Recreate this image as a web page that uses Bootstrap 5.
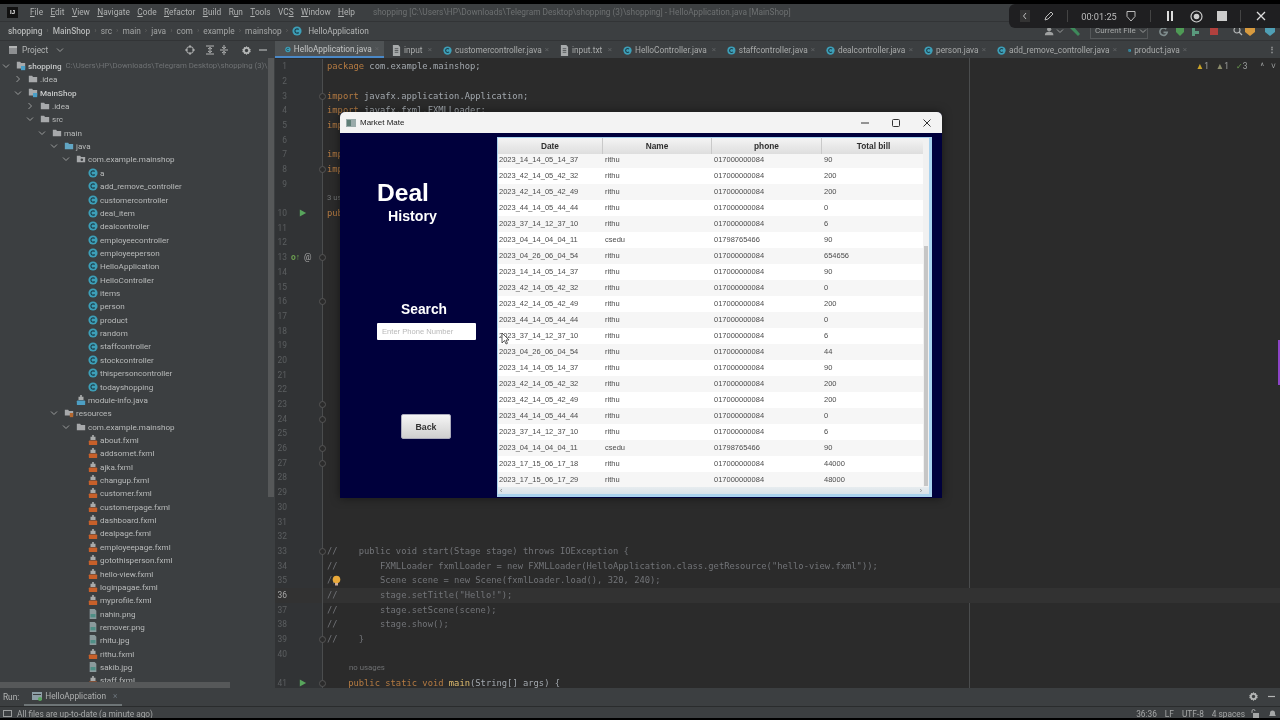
<!DOCTYPE html>
<html lang="en">
<head>
<meta charset="utf-8">
<title>HelloApplication.java</title>
<link href="https://cdn.jsdelivr.net/npm/bootstrap@5.3.0/dist/css/bootstrap.min.css" rel="stylesheet">
<style>
html,body{height:720px;overflow:hidden;background:#000}
body{font-family:Roboto,"Liberation Sans",sans-serif;font-size:8.3px;color:#b4b6b6;padding:4px 0 2px}
.ide{height:714px;position:relative;background:#2b2b2b;filter:blur(.4px)}
.ml1{margin-left:1px}.ml2{margin-left:2px}.ml4{margin-left:4px}.ml5{margin-left:5px}.ml6{margin-left:6px}.ml8{margin-left:8px}.ml9{margin-left:9px}.ml10{margin-left:10px}.ml12{margin-left:12px}.ml14{margin-left:14px}
.titlebar{height:17px;background:#3c3f41;padding-left:7px}
.titlebar u{text-underline-offset:1px}
.ij{width:11px;height:11px;background:#111;color:#eee;font:bold 6px/11px "Liberation Sans",sans-serif;text-align:center}
.menus{margin-left:12px;gap:7.4px;font-size:8.3px;color:#b0b2b2}
.wintitle{margin-left:18px;color:#6d7071;font-size:8.3px;white-space:nowrap}
.navrow{height:20px;background:#3c3f41;padding-left:8px;border-top:1px solid #323436;border-bottom:1px solid #323436;gap:4px;font-size:8.3px}
.navrow .sep{color:#666;font-size:8px}
.navrow .dimtx{color:#a3a5a5}
.navrow b{font-weight:500}
.runtools{color:#9a9c9c}
.curfile{width:58px;height:15px;border:1px solid #55585a;padding-left:4px;color:#a6a8a8;font-size:8px;white-space:nowrap}
.tabrow{height:17px;background:#3c3f41}
.projhead{width:275px;padding:1px 7px 0 8px;flex:none;font-size:8.3px}
.tabs{flex:1;font-size:8.3px;color:#a8aaaa;white-space:nowrap;overflow:hidden}
.edtab{height:17px;padding:1px 5px 0 6px;gap:3px;flex:none}
.edtab.cur{background:#4e5254;border-bottom:2px solid #4a88c7;color:#c4c6c6;padding-left:10px;margin-right:2px}
.edtab .xx{color:#5f6264;font-size:8px;margin-left:auto}
.w1{width:109px}.w2{width:51px}.w3{width:117px}.w4{width:63px}.w5{width:104px}.w6{width:99px}.w7{width:98px}.w8{width:73px}.w9{width:131px}.w10{width:70px}
.mainarea{height:630px}
.projtree{width:275px;flex:none;background:#3c3f41;position:relative;overflow:hidden;padding-top:1.3px}
.tr{height:13.37px;white-space:nowrap;font-size:8.1px;color:#b9bbbb}
.tr b{font-weight:500;color:#c6c8c8}
.tr .pathx{color:#6f7274;margin-left:4px;font-size:7.8px}
.chev{width:16px;flex:none;padding-left:2px;line-height:0}
.ico{width:10px;height:10px;flex:none;margin-right:2px}
.lv0{padding-left:0}.lv1{padding-left:12px}.lv2{padding-left:24px}.lv3{padding-left:36px}.lv4{padding-left:48px}.lv5{padding-left:60px}
.leaf{padding-left:88px}
.vscroll{position:absolute;left:268px;top:0;width:6px;height:439px;background:#565859}
.hscroll{position:absolute;left:0;top:624px;width:230px;height:6px;background:#565859}
.edpane{flex:1;position:relative;overflow:hidden;background:linear-gradient(#4a4c4d,#4a4c4d) 694px 0/1px 100% no-repeat #2b2b2b;padding-top:1.2px}
.er{height:14.7px;font:8.8px/14.7px "DejaVu Sans Mono","Liberation Mono",monospace;color:#a2a8ae;white-space:pre;position:relative}
.er.caretln{background:#323232}
.er.caretln .gut{background:#323232;color:#a8a8a8}
.gut{width:48px;flex:none;height:100%;background:#313335;border-right:1px solid #4b4d4e;color:#5c5f61;padding-right:35px;text-align:right;position:relative;font:8.4px/14.7px Roboto,sans-serif}
.gut.fold::after{content:"";position:absolute;right:-4px;top:4px;width:7px;height:7px;border:1px solid #555;border-radius:50%;background:#2b2b2b}
.cd{padding-left:4px}
.kw{color:#b57b42}
.fn{color:#e0bd6f}
.cm{color:#727478}
.inl{color:#6e7072;font:7.8px/14.7px Roboto,sans-serif}
.inlfar{padding-left:26px}
.mk{position:absolute;top:50%;transform:translateY(-50%);line-height:1}
.bulb{position:absolute;left:56px;top:2px}
.insp{position:absolute;right:4px;top:2px;gap:7px;color:#9ea0a0;font-size:8.4px}
.runbar{height:18.5px;background:#3c3f41;border-bottom:1px solid #2a2c2d;padding-left:3px;position:relative;font-size:8.3px}
.runtab{width:98px;height:17.5px;margin-left:5px;padding:0 0 0 8px;border-bottom:2px solid #6e7577;gap:3px;color:#aeb0b0}
.statusbar{height:11.5px;background:#3c3f41;padding:3px 0 0 3px;font-size:8.3px;color:#a5a7a7;overflow:hidden}
.statusbar>*{flex:none}
.statusr{padding-right:3px}
.appwin{position:absolute;left:340px;top:108px;width:602px;height:386px;border-radius:5px 5px 0 0;overflow:hidden;background:#00003c;box-shadow:0 0 10px rgba(0,0,0,.5)}
.apphead{height:21px;background:#f3f3f3;color:#222;font:8px "Liberation Sans",sans-serif;padding-left:6px;gap:4px}
.wcb{width:31px;text-align:center;line-height:0}
.appbody{height:365px;background:#00003c;padding:4px 10px 1px 0}
.leftp{width:157px;flex:none;padding-left:37px;color:#fff;font-family:"Liberation Sans",sans-serif;font-weight:700}
.dealh{font-size:24.6px;line-height:28px;margin-top:42px}
.histh{font-size:14.2px;line-height:16px;margin:1px 0 0 11px}
.srchh{font-size:13.8px;line-height:16px;margin:78px 0 0 24px}
.phone{width:99px;height:17px;min-height:0;margin-top:5px;padding:0 5px;border:0;border-radius:1px;font-size:7.6px;font-weight:400;font-family:"Liberation Sans",sans-serif}
.phone::placeholder{color:#b9b9b9;opacity:1}
.backb{width:50px;height:25px;margin:74px 0 0 24px;padding:0;border:1px solid #aab;border-radius:2px;background:linear-gradient(#f5f5f5,#cfcfcf);color:#333;font:700 8.8px "Liberation Sans",sans-serif}
.tblbox{flex:1;background:#fff;border:solid #a9d2ee;border-width:1px 3px 3px 1px;position:relative;overflow:hidden;height:360px;width:435px}
.tblhead{height:16px;background:linear-gradient(#f4f4f4,#dedede);width:428px;font:700 8.3px/16px "Liberation Sans",sans-serif;color:#2e2e2e;text-align:center}
.tblhead>div{border-right:1px solid #c9c9c9}
.cdate{width:105px}.cname{width:109px}.cphone{width:110px}.cbill{width:104px}
.tblclip{height:334px;overflow:hidden;width:428px}
.billt{table-layout:fixed;width:428px;margin:-2px 0 0;--bs-table-bg:transparent;--bs-table-striped-bg:#f6f6f6;--bs-table-striped-color:#4c4c4c;--bs-table-color:#4c4c4c;font:7.5px "Liberation Sans",sans-serif}
.billt td{height:16px;padding:0 1px 0 2px;border:0;line-height:16px;white-space:nowrap;overflow:hidden;vertical-align:middle}
.billt td:first-child{padding-left:1px}
.tvs{position:absolute;right:0;top:0;width:6px;bottom:7px;background:#f1f1f1}
.tvth{position:absolute;right:1px;top:108px;width:4px;height:240px;background:#c6c6c6}
.ths{position:absolute;left:0;bottom:0;height:7px;width:432px;background:linear-gradient(#e7ecef,#d8e2e9);color:#777;font:7px/7px "Liberation Sans",sans-serif;padding:0 8px 0 2px}
.pointer{position:absolute;left:161px;top:220px}
.recorder{position:absolute;left:1009px;top:0;width:271px;height:24px;background:#1f1f21;border-radius:6px 0 0 6px;color:#bdbdbd;font-size:9px;padding-left:4px;overflow:hidden}
.recitem{flex:none;line-height:0;text-align:center}
.recw24{width:24px}.recw26{width:26px}.recw37{width:37px}.recw16{width:16px}.recw36{width:36px}.recw39{width:39px}
.rectime{width:38px;line-height:normal;font-size:9.2px;white-space:nowrap;margin-left:12px}
.recsep{width:1px;height:12px;background:#444;flex:none}
.purple{position:absolute;right:0;top:336px;width:2px;height:45px;background:#8e44c8}
</style>
</head>
<body>
<svg width="0" height="0" class="position-absolute">
<symbol id="cl" viewBox="0 0 12 12"><circle cx="6" cy="6" r="5.500" fill="#3d9fb8"/><path d="M8 4.200A2.600 2.600 0 1 0 8 7.800" fill="none" stroke="#1d3f4b" stroke-width="1.400"/></symbol>
<symbol id="fo" viewBox="0 0 12 12"><path d="M1 2h4l1 1.500h5V10H1z" fill="#a7a9ab"/></symbol>
<symbol id="fb" viewBox="0 0 12 12"><path d="M1 2h4l1 1.500h5V10H1z" fill="#62a6c4"/></symbol>
<symbol id="fp" viewBox="0 0 12 12"><path d="M1 2h4l1 1.500h5V10H1z" fill="#a7a9ab"/><circle cx="7" cy="7" r="1.500" fill="#3c3f41"/></symbol>
<symbol id="fm" viewBox="0 0 12 12"><path d="M1 1h4l1 1.500h5V9H1z" fill="#a7a9ab"/><rect x="6" y="6" width="5" height="5" fill="#4a9fc7"/></symbol>
<symbol id="fr" viewBox="0 0 12 12"><path d="M1 2h4l1 1.500h5V9H1z" fill="#a7a9ab"/><rect x="7" y="6" width="4" height="5" fill="#b5682f"/></symbol>
<symbol id="fx" viewBox="0 0 12 12"><path d="M5 0h2v2h2v4H3V2h2z" fill="#a9abab"/><rect x="1" y="6.500" width="10" height="5.500" rx="1" fill="#c8602a"/></symbol>
<symbol id="mi" viewBox="0 0 12 12"><path d="M5 0h2v2h2v4H3V2h2z" fill="#a9abab"/><rect x="1" y="6.500" width="10" height="5.500" rx="1" fill="#4d9fc4"/></symbol>
<symbol id="im" viewBox="0 0 12 12"><path d="M2 0h6l2 2v10H2z" fill="#8b9a9c"/><rect x="3" y="6" width="6" height="4" fill="#4f8f86"/></symbol>
<symbol id="dn" viewBox="0 0 8 8"><path d="M1 2.500l3 3 3-3" fill="none" stroke="#9a9c9c" stroke-width="1"/></symbol>
<symbol id="rt" viewBox="0 0 8 8"><path d="M2.500 1l3 3-3 3" fill="none" stroke="#9a9c9c" stroke-width="1"/></symbol>
<symbol id="tx" viewBox="0 0 10 12"><path d="M1 0h6l2 2v10H1z" fill="#a7aaab"/><path d="M3 4h4M3 6h4M3 8h4" stroke="#3c3f41" stroke-width=".8"/></symbol>
<symbol id="gr" viewBox="0 0 12 12"><path d="M6 1l1 1.400 1.700-.3.300 1.700 1.700.7-.7 1.500.7 1.500-1.700.7-.3 1.700-1.700-.3L6 11l-1-1.400-1.700.3-.3-1.700-1.700-.7L2 6 1.300 4.500 3 3.800l.3-1.700 1.700.3z" fill="#b3b5b5"/><circle cx="6" cy="6" r="1.800" fill="#3c3f41"/></symbol>
<symbol id="pl" viewBox="0 0 10 10"><path d="M2 1l7 4-7 4z" fill="#58a55c"/></symbol>
</svg>

<div class="ide">
  <div class="titlebar d-flex align-items-center">
    <div class="ij">IJ</div>
    <div class="menus d-flex">
      <span><u>F</u>ile</span><span><u>E</u>dit</span><span><u>V</u>iew</span><span><u>N</u>avigate</span><span><u>C</u>ode</span><span><u>R</u>efactor</span><span><u>B</u>uild</span><span>R<u>u</u>n</span><span><u>T</u>ools</span><span>VC<u>S</u></span><span><u>W</u>indow</span><span><u>H</u>elp</span>
    </div>
    <div class="wintitle">shopping [C:\Users\HP\Downloads\Telegram Desktop\shopping (3)\shopping] - HelloApplication.java [MainShop]</div>
  </div>

  <div class="navrow d-flex align-items-center">
    <b>shopping</b><span class="sep">›</span><b>MainShop</b><span class="sep">›</span><span class="dimtx">src</span><span class="sep">›</span><span class="dimtx">main</span><span class="sep">›</span><span class="dimtx">java</span><span class="sep">›</span><span class="dimtx">com</span><span class="sep">›</span><span class="dimtx">example</span><span class="sep">›</span><span class="dimtx">mainshop</span><span class="sep">›</span><svg class="ico"><use href="#cl"/></svg><span>HelloApplication</span>
    <div class="runtools d-flex align-items-center ms-auto">
      <svg width="12" height="12" viewBox="0 0 14 12"><circle cx="6" cy="4" r="2.500" fill="#9fa1a1"/><path d="M1 11c0-3 2-4 5-4s5 1 5 4z" fill="#9fa1a1"/></svg>
      <svg width="8" height="8"><use href="#dn"/></svg>
      <svg width="12" height="12" viewBox="0 0 12 12" class="ml5"><path d="M1 3l3-2 7 8-2 2z" fill="#3e8a5b"/></svg>
      <div class="curfile d-flex align-items-center ml9">Current File<svg width="8" height="8" class="ms-auto"><use href="#dn"/></svg></div>
      <svg width="11" height="11" viewBox="0 0 12 12" class="ml10"><path d="M9 3.500A4 4 0 1 0 10 7H6" fill="none" stroke="#7f8c8d" stroke-width="1.800"/></svg>
      <svg width="10" height="11" viewBox="0 0 10 11" class="ml6"><path d="M1 1h8v5l-4 4-4-4z" fill="#4e9a55"/></svg>
      <svg width="10" height="11" viewBox="0 0 10 11" class="ml5"><path d="M2 1h3v9H2zM5 5h4v3H5z" fill="#5a9a7d"/></svg>
      <svg width="10" height="10" viewBox="0 0 10 10" class="ml9"><rect x="1" y="1" width="8" height="8" fill="#b0413e"/></svg>
      <svg width="10" height="10" viewBox="0 0 10 10" class="ml14"><circle cx="4" cy="4" r="3" fill="none" stroke="#b4b6b6" stroke-width="1.200"/><path d="M6 6l3 3" stroke="#b4b6b6" stroke-width="1.200"/></svg>
      <svg width="12" height="12" viewBox="0 0 12 12" class="ml1"><path d="M1 2l5-1 5 1v5l-5 4-5-4z" fill="#d79a3f"/></svg>
      <svg width="12" height="12" viewBox="0 0 12 12" class="ml8 me-1"><path d="M1 2l5-1 5 1v5l-5 4-5-4z" fill="#4f9fb5"/></svg>
    </div>
  </div>

  <div class="tabrow d-flex align-items-center">
    <div class="projhead d-flex align-items-center">
      <svg width="10" height="10" viewBox="0 0 10 10" class="me-1"><rect x="1" y="1" width="8" height="8" fill="#8d8f91"/><rect x="1" y="1" width="8" height="2" fill="#b2b4b4"/></svg>
      <span>Project</span><svg width="8" height="8" class="ms-2"><use href="#dn"/></svg>
      <div class="d-flex align-items-center ms-auto">
        <svg width="10" height="10" viewBox="0 0 10 10"><circle cx="5" cy="5" r="3.500" fill="none" stroke="#b3b5b5"/><path d="M5 0v3M5 7v3M0 5h3M7 5h3" stroke="#b3b5b5"/></svg>
        <svg width="10" height="10" viewBox="0 0 10 10" class="ml10"><path d="M1 1h8M1 9h8M5 2.500v5M3 4l2-1.500L7 4M3 6l2 1.500L7 6" fill="none" stroke="#b3b5b5"/></svg>
        <svg width="10" height="10" viewBox="0 0 10 10" class="ml4"><path d="M1 5h8M5 0v3.500M5 10V6.500M3 2l2 1.500L7 2M3 8l2-1.500L7 8" fill="none" stroke="#b3b5b5"/></svg>
        <svg width="11" height="11" class="ml12"><use href="#gr"/></svg>
        <svg width="10" height="10" viewBox="0 0 10 10" class="ml6"><path d="M1 5h8" stroke="#b3b5b5" stroke-width="1.200"/></svg>
      </div>
    </div>
    <div class="tabs d-flex align-items-center">
      <div class="edtab cur w1 d-flex align-items-center"><svg width="9" height="9"><use href="#cl"/></svg><span>HelloApplication.java</span><span class="xx">×</span></div>
      <div class="edtab w2 d-flex align-items-center"><svg width="9" height="11"><use href="#tx"/></svg><span>input</span><span class="xx">×</span></div>
      <div class="edtab w3 d-flex align-items-center"><svg width="9" height="9"><use href="#cl"/></svg><span>customercontroller.java</span><span class="xx">×</span></div>
      <div class="edtab w4 d-flex align-items-center"><svg width="9" height="11"><use href="#tx"/></svg><span>input.txt</span><span class="xx">×</span></div>
      <div class="edtab w5 d-flex align-items-center"><svg width="9" height="9"><use href="#cl"/></svg><span>HelloController.java</span><span class="xx">×</span></div>
      <div class="edtab w6 d-flex align-items-center"><svg width="9" height="9"><use href="#cl"/></svg><span>staffcontroller.java</span><span class="xx">×</span></div>
      <div class="edtab w7 d-flex align-items-center"><svg width="9" height="9"><use href="#cl"/></svg><span>dealcontroller.java</span><span class="xx">×</span></div>
      <div class="edtab w8 d-flex align-items-center"><svg width="9" height="9"><use href="#cl"/></svg><span>person.java</span><span class="xx">×</span></div>
      <div class="edtab w9 d-flex align-items-center"><svg width="9" height="9"><use href="#cl"/></svg><span>add_remove_controller.java</span><span class="xx">×</span></div>
      <div class="edtab w10 d-flex align-items-center"><svg width="9" height="9"><use href="#cl"/></svg><span>product.java</span><span class="xx">×</span></div>
      <div class="ms-auto pe-1 fw-bold">⋮</div>
    </div>
  </div>

  <div class="mainarea d-flex">
    <div class="projtree">
      <div class="tr lv0 d-flex align-items-center"><span class="chev"><svg width="8" height="8"><use href="#dn"/></svg></span><svg class="ico"><use href="#fm"/></svg><b>shopping</b><span class="pathx">C:\Users\HP\Downloads\Telegram Desktop\shopping (3)\s</span></div>
      <div class="tr lv1 d-flex align-items-center"><span class="chev"><svg width="8" height="8"><use href="#rt"/></svg></span><svg class="ico"><use href="#fo"/></svg>.idea</div>
      <div class="tr lv1 d-flex align-items-center"><span class="chev"><svg width="8" height="8"><use href="#dn"/></svg></span><svg class="ico"><use href="#fm"/></svg><b>MainShop</b></div>
      <div class="tr lv2 d-flex align-items-center"><span class="chev"><svg width="8" height="8"><use href="#rt"/></svg></span><svg class="ico"><use href="#fo"/></svg>.idea</div>
      <div class="tr lv2 d-flex align-items-center"><span class="chev"><svg width="8" height="8"><use href="#dn"/></svg></span><svg class="ico"><use href="#fo"/></svg>src</div>
      <div class="tr lv3 d-flex align-items-center"><span class="chev"><svg width="8" height="8"><use href="#dn"/></svg></span><svg class="ico"><use href="#fo"/></svg>main</div>
      <div class="tr lv4 d-flex align-items-center"><span class="chev"><svg width="8" height="8"><use href="#dn"/></svg></span><svg class="ico"><use href="#fb"/></svg>java</div>
      <div class="tr lv5 d-flex align-items-center"><span class="chev"><svg width="8" height="8"><use href="#dn"/></svg></span><svg class="ico"><use href="#fp"/></svg>com.example.mainshop</div>
      <div class="tr leaf d-flex align-items-center"><svg class="ico"><use href="#cl"/></svg>a</div>
      <div class="tr leaf d-flex align-items-center"><svg class="ico"><use href="#cl"/></svg>add_remove_controller</div>
      <div class="tr leaf d-flex align-items-center"><svg class="ico"><use href="#cl"/></svg>customercontroller</div>
      <div class="tr leaf d-flex align-items-center"><svg class="ico"><use href="#cl"/></svg>deal_item</div>
      <div class="tr leaf d-flex align-items-center"><svg class="ico"><use href="#cl"/></svg>dealcontroller</div>
      <div class="tr leaf d-flex align-items-center"><svg class="ico"><use href="#cl"/></svg>employeecontroller</div>
      <div class="tr leaf d-flex align-items-center"><svg class="ico"><use href="#cl"/></svg>employeeperson</div>
      <div class="tr leaf d-flex align-items-center"><svg class="ico"><use href="#cl"/></svg>HelloApplication</div>
      <div class="tr leaf d-flex align-items-center"><svg class="ico"><use href="#cl"/></svg>HelloController</div>
      <div class="tr leaf d-flex align-items-center"><svg class="ico"><use href="#cl"/></svg>items</div>
      <div class="tr leaf d-flex align-items-center"><svg class="ico"><use href="#cl"/></svg>person</div>
      <div class="tr leaf d-flex align-items-center"><svg class="ico"><use href="#cl"/></svg>product</div>
      <div class="tr leaf d-flex align-items-center"><svg class="ico"><use href="#cl"/></svg>random</div>
      <div class="tr leaf d-flex align-items-center"><svg class="ico"><use href="#cl"/></svg>staffcontroller</div>
      <div class="tr leaf d-flex align-items-center"><svg class="ico"><use href="#cl"/></svg>stockcontroller</div>
      <div class="tr leaf d-flex align-items-center"><svg class="ico"><use href="#cl"/></svg>thispersoncontroller</div>
      <div class="tr leaf d-flex align-items-center"><svg class="ico"><use href="#cl"/></svg>todayshopping</div>
      <div class="tr lv5 d-flex align-items-center"><span class="chev"></span><svg class="ico"><use href="#mi"/></svg>module-info.java</div>
      <div class="tr lv4 d-flex align-items-center"><span class="chev"><svg width="8" height="8"><use href="#dn"/></svg></span><svg class="ico"><use href="#fr"/></svg>resources</div>
      <div class="tr lv5 d-flex align-items-center"><span class="chev"><svg width="8" height="8"><use href="#dn"/></svg></span><svg class="ico"><use href="#fo"/></svg>com.example.mainshop</div>
      <div class="tr leaf d-flex align-items-center"><svg class="ico"><use href="#fx"/></svg>about.fxml</div>
      <div class="tr leaf d-flex align-items-center"><svg class="ico"><use href="#fx"/></svg>addsomet.fxml</div>
      <div class="tr leaf d-flex align-items-center"><svg class="ico"><use href="#fx"/></svg>ajka.fxml</div>
      <div class="tr leaf d-flex align-items-center"><svg class="ico"><use href="#fx"/></svg>changup.fxml</div>
      <div class="tr leaf d-flex align-items-center"><svg class="ico"><use href="#fx"/></svg>customer.fxml</div>
      <div class="tr leaf d-flex align-items-center"><svg class="ico"><use href="#fx"/></svg>customerpage.fxml</div>
      <div class="tr leaf d-flex align-items-center"><svg class="ico"><use href="#fx"/></svg>dashboard.fxml</div>
      <div class="tr leaf d-flex align-items-center"><svg class="ico"><use href="#fx"/></svg>dealpage.fxml</div>
      <div class="tr leaf d-flex align-items-center"><svg class="ico"><use href="#fx"/></svg>employeepage.fxml</div>
      <div class="tr leaf d-flex align-items-center"><svg class="ico"><use href="#fx"/></svg>gotothisperson.fxml</div>
      <div class="tr leaf d-flex align-items-center"><svg class="ico"><use href="#fx"/></svg>hello-view.fxml</div>
      <div class="tr leaf d-flex align-items-center"><svg class="ico"><use href="#fx"/></svg>loginpagae.fxml</div>
      <div class="tr leaf d-flex align-items-center"><svg class="ico"><use href="#fx"/></svg>myprofile.fxml</div>
      <div class="tr leaf d-flex align-items-center"><svg class="ico"><use href="#im"/></svg>nahin.png</div>
      <div class="tr leaf d-flex align-items-center"><svg class="ico"><use href="#im"/></svg>remover.png</div>
      <div class="tr leaf d-flex align-items-center"><svg class="ico"><use href="#im"/></svg>rhitu.jpg</div>
      <div class="tr leaf d-flex align-items-center"><svg class="ico"><use href="#fx"/></svg>rithu.fxml</div>
      <div class="tr leaf d-flex align-items-center"><svg class="ico"><use href="#im"/></svg>sakib.jpg</div>
      <div class="tr leaf d-flex align-items-center"><svg class="ico"><use href="#fx"/></svg>staff.fxml</div>
      <div class="vscroll"></div>
      <div class="hscroll"></div>
    </div>

    <div class="edpane">
      <div class="er d-flex"><div class="gut">1</div><div class="cd"><span class="kw">package</span> com.example.mainshop;</div></div>
      <div class="er d-flex"><div class="gut">2</div></div>
      <div class="er d-flex"><div class="gut fold">3</div><div class="cd"><span class="kw">import</span> javafx.application.Application;</div></div>
      <div class="er d-flex"><div class="gut">4</div><div class="cd"><span class="kw">import</span> javafx.fxml.FXMLLoader;</div></div>
      <div class="er d-flex"><div class="gut">5</div><div class="cd"><span class="kw">imp</span></div></div>
      <div class="er d-flex"><div class="gut">6</div></div>
      <div class="er d-flex"><div class="gut">7</div><div class="cd"><span class="kw">imp</span></div></div>
      <div class="er d-flex"><div class="gut fold">8</div><div class="cd"><span class="kw">imp</span></div></div>
      <div class="er d-flex"><div class="gut">9</div></div>
      <div class="er d-flex"><div class="gut"></div><div class="cd inl">3 us</div></div>
      <div class="er d-flex"><div class="gut">10<svg class="mk" style="left:23px" width="9" height="9"><use href="#pl"/></svg></div><div class="cd"><span class="kw">pub</span></div></div>
      <div class="er d-flex"><div class="gut">11</div></div>
      <div class="er d-flex"><div class="gut">12</div></div>
      <div class="er d-flex"><div class="gut fold">13<span class="mk" style="left:16px;color:#6a9c4f;font-weight:700">o↑</span><span class="mk" style="left:29px;color:#aaa">@</span></div></div>
      <div class="er d-flex"><div class="gut">14</div></div>
      <div class="er d-flex"><div class="gut">15</div></div>
      <div class="er d-flex"><div class="gut fold">16</div></div>
      <div class="er d-flex"><div class="gut">17</div></div>
      <div class="er d-flex"><div class="gut">18</div></div>
      <div class="er d-flex"><div class="gut">19</div></div>
      <div class="er d-flex"><div class="gut">20</div></div>
      <div class="er d-flex"><div class="gut">21</div></div>
      <div class="er d-flex"><div class="gut">22</div></div>
      <div class="er d-flex"><div class="gut fold">23</div></div>
      <div class="er d-flex"><div class="gut fold">24</div></div>
      <div class="er d-flex"><div class="gut">25</div></div>
      <div class="er d-flex"><div class="gut fold">26</div></div>
      <div class="er d-flex"><div class="gut fold">27</div></div>
      <div class="er d-flex"><div class="gut">28</div></div>
      <div class="er d-flex"><div class="gut">29</div></div>
      <div class="er d-flex"><div class="gut">30</div></div>
      <div class="er d-flex"><div class="gut">31</div></div>
      <div class="er d-flex"><div class="gut">32</div></div>
      <div class="er d-flex"><div class="gut fold">33</div><div class="cd cm">//    public void start(Stage stage) throws IOException {</div></div>
      <div class="er d-flex"><div class="gut">34</div><div class="cd cm">//        FXMLLoader fxmlLoader = new FXMLLoader(HelloApplication.class.getResource("hello-view.fxml"));</div></div>
      <div class="er d-flex"><div class="gut">35</div><div class="cd cm">//        Scene scene = new Scene(fxmlLoader.load(), 320, 240);</div><svg class="bulb" width="11" height="11" viewBox="0 0 11 11"><circle cx="5.500" cy="4.500" r="3.800" fill="#e9a93a"/><rect x="4" y="8" width="3" height="2.500" fill="#ccaa99"/></svg></div>
      <div class="er caretln d-flex"><div class="gut">36</div><div class="cd cm">//        stage.setTitle("Hello!");</div></div>
      <div class="er d-flex"><div class="gut">37</div><div class="cd cm">//        stage.setScene(scene);</div></div>
      <div class="er d-flex"><div class="gut">38</div><div class="cd cm">//        stage.show();</div></div>
      <div class="er d-flex"><div class="gut fold">39</div><div class="cd cm">//    }</div></div>
      <div class="er d-flex"><div class="gut">40</div></div>
      <div class="er d-flex"><div class="gut"></div><div class="cd inl inlfar">no usages</div></div>
      <div class="er d-flex"><div class="gut fold">41<svg class="mk" style="left:23px" width="9" height="9"><use href="#pl"/></svg></div><div class="cd">    <span class="kw">public static void</span> <span class="fn">main</span>(String[] args) {</div></div>
      <div class="insp d-flex align-items-center">
        <span><span style="color:#c9a227">▲</span>1</span><span><span style="color:#8a8a6a">▲</span>1</span><span><span style="color:#6a9c4f">✓</span>3</span><span class="ml6">^</span><span>˅</span>
      </div>
    </div>
  </div>

  <div class="runbar d-flex align-items-center">
    <span>Run:</span>
    <div class="runtab d-flex align-items-center">
      <svg width="10" height="10" viewBox="0 0 10 10"><rect x="0" y="1" width="10" height="8" fill="#8d9ea5"/><rect x="1" y="3" width="8" height="1" fill="#3c3f41"/><circle cx="8" cy="8" r="2" fill="#58a55c"/></svg><span>HelloApplication</span><span class="text-secondary ml4">×</span>
    </div>
    <svg width="11" height="11" class="ms-auto"><use href="#gr"/></svg>
    <svg width="9" height="9" viewBox="0 0 9 9" class="ml8 me-1"><path d="M1 4.500h7" stroke="#b3b5b5" stroke-width="1.200"/></svg>
  </div>
  <div class="statusbar d-flex align-items-center">
    <svg width="9" height="9" viewBox="0 0 9 9"><rect x=".5" y="1.500" width="8" height="6" fill="none" stroke="#9a9c9c"/></svg>
    <span class="ml5">All files are up-to-date (a minute ago)</span>
    <div class="statusr d-flex align-items-center ms-auto">
      <span>36:36</span><span class="ml8">LF</span><span class="ml8">UTF-8</span><span class="ml8">4 spaces</span>
      <svg width="9" height="9" viewBox="0 0 9 9" class="ml6"><rect x="2" y="4" width="6" height="5" fill="#a5a7a7"/><path d="M1 4V2a1.500 1.500 0 0 1 3 0" fill="none" stroke="#a5a7a7"/></svg>
      <svg width="9" height="9" viewBox="0 0 9 9" class="ml8"><path d="M1 7c1-1 1-2 1-3a2.500 2.500 0 0 1 5 0c0 1 0 2 1 3z" fill="#a5a7a7"/></svg>
    </div>
  </div>

  <div class="appwin">
    <div class="apphead d-flex align-items-center">
      <svg width="10" height="10" viewBox="0 0 10 10"><rect x="0" y="1" width="10" height="8" fill="#99aaaa"/><rect x="1" y="2" width="4" height="6" fill="#5f7f78"/></svg>
      <span>Market Mate</span>
      <div class="d-flex align-items-center ms-auto">
        <div class="wcb"><svg width="10" height="10" viewBox="0 0 10 10"><path d="M1 5h8" stroke="#333"/></svg></div>
        <div class="wcb"><svg width="10" height="10" viewBox="0 0 10 10"><rect x="1.500" y="1.500" width="7" height="7" rx="1" fill="none" stroke="#333"/></svg></div>
        <div class="wcb"><svg width="10" height="10" viewBox="0 0 10 10"><path d="M1.500 1.500l7 7M8.500 1.500l-7 7" stroke="#333"/></svg></div>
      </div>
    </div>
    <div class="appbody d-flex">
      <div class="leftp">
        <div class="dealh">Deal</div>
        <div class="histh">History</div>
        <div class="srchh">Search</div>
        <input class="form-control phone" type="text" placeholder="Enter Phone Number">
        <button class="btn backb" type="button">Back</button>
      </div>
      <div class="tblbox">
        <div class="tblhead d-flex"><div class="cdate">Date</div><div class="cname">Name</div><div class="cphone">phone</div><div class="cbill">Total bill</div></div>
        <div class="tblclip">
          <table class="table table-striped billt">
            <colgroup><col class="cdate"><col class="cname"><col class="cphone"><col class="cbill"></colgroup>
            <tbody>
              <tr><td>2023_14_14_05_14_37</td><td>rithu</td><td>017000000084</td><td>90</td></tr>
              <tr><td>2023_42_14_05_42_32</td><td>rithu</td><td>017000000084</td><td>200</td></tr>
              <tr><td>2023_42_14_05_42_49</td><td>rithu</td><td>017000000084</td><td>200</td></tr>
              <tr><td>2023_44_14_05_44_44</td><td>rithu</td><td>017000000084</td><td>0</td></tr>
              <tr><td>2023_37_14_12_37_10</td><td>rithu</td><td>017000000084</td><td>6</td></tr>
              <tr><td>2023_04_14_04_04_11</td><td>csedu</td><td>01798765466</td><td>90</td></tr>
              <tr><td>2023_04_26_06_04_54</td><td>rithu</td><td>017000000084</td><td>654656</td></tr>
              <tr><td>2023_14_14_05_14_37</td><td>rithu</td><td>017000000084</td><td>90</td></tr>
              <tr><td>2023_42_14_05_42_32</td><td>rithu</td><td>017000000084</td><td>0</td></tr>
              <tr><td>2023_42_14_05_42_49</td><td>rithu</td><td>017000000084</td><td>200</td></tr>
              <tr><td>2023_44_14_05_44_44</td><td>rithu</td><td>017000000084</td><td>0</td></tr>
              <tr><td>2023_37_14_12_37_10</td><td>rithu</td><td>017000000084</td><td>6</td></tr>
              <tr><td>2023_04_26_06_04_54</td><td>rithu</td><td>017000000084</td><td>44</td></tr>
              <tr><td>2023_14_14_05_14_37</td><td>rithu</td><td>017000000084</td><td>90</td></tr>
              <tr><td>2023_42_14_05_42_32</td><td>rithu</td><td>017000000084</td><td>200</td></tr>
              <tr><td>2023_42_14_05_42_49</td><td>rithu</td><td>017000000084</td><td>200</td></tr>
              <tr><td>2023_44_14_05_44_44</td><td>rithu</td><td>017000000084</td><td>0</td></tr>
              <tr><td>2023_37_14_12_37_10</td><td>rithu</td><td>017000000084</td><td>6</td></tr>
              <tr><td>2023_04_14_04_04_11</td><td>csedu</td><td>01798765466</td><td>90</td></tr>
              <tr><td>2023_17_15_06_17_18</td><td>rithu</td><td>017000000084</td><td>44000</td></tr>
              <tr><td>2023_17_15_06_17_29</td><td>rithu</td><td>017000000084</td><td>48000</td></tr>
            </tbody>
          </table>
        </div>
        <div class="tvs"><div class="tvth"></div></div>
        <div class="ths d-flex justify-content-between"><span>‹</span><span>›</span></div>
      </div>
    </div>
    <svg class="pointer" width="10" height="13" viewBox="0 0 10 13"><path d="M1 1v10l2.500-2.500L5 12l1.500-.7L5 8h3z" fill="#fff" stroke="#333" stroke-width=".8"/></svg>
  </div>

  <div class="recorder d-flex align-items-center">
    <div class="recitem recw24"><svg width="10" height="12" viewBox="0 0 10 12"><rect width="10" height="12" fill="#333"/><path d="M6 3L3.500 6 6 9" fill="none" stroke="#bbb"/></svg></div>
    <div class="recitem recw24"><svg width="12" height="12" viewBox="0 0 12 12"><path d="M2 10l1-3 5-5 2 2-5 5z" fill="none" stroke="#bbb"/></svg></div>
    <div class="recsep ml6"></div>
    <div class="recitem rectime">00:01:25</div>
    <div class="recitem recw26"><svg width="10" height="12" viewBox="0 0 10 12"><path d="M1 1.500h8v5L5 11 1 6.500z" fill="none" stroke="#bbb"/></svg></div>
    <div class="recsep ml6"></div>
    <div class="recitem recw37"><svg width="12" height="12" viewBox="0 0 12 12"><path d="M3 1h2v10H3zM7 1h2v10H7z" fill="#dddddd"/></svg></div>
    <div class="recitem recw16"><svg width="13" height="13" viewBox="0 0 13 13"><circle cx="6.500" cy="6.500" r="5.500" fill="none" stroke="#cccccc" stroke-width="1.200"/><circle cx="6.500" cy="6.500" r="2.800" fill="#cccccc"/></svg></div>
    <div class="recitem recw36"><svg width="10" height="10"><rect width="10" height="10" fill="#cccccc"/></svg></div>
    <div class="recsep"></div>
    <div class="recitem recw39"><svg width="10" height="10" viewBox="0 0 10 10"><path d="M1 1l8 8M9 1L1 9" stroke="#dddddd" stroke-width="1.300"/></svg></div>
  </div>
  <div class="purple"></div>
</div>
<script src="https://cdn.jsdelivr.net/npm/bootstrap@5.3.0/dist/js/bootstrap.bundle.min.js"></script>
</body>
</html>
